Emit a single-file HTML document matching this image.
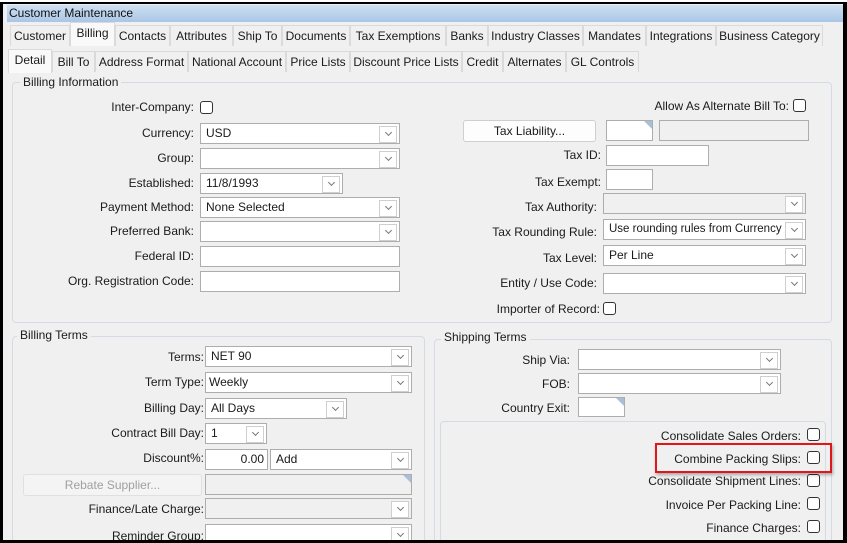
<!DOCTYPE html>
<html><head><meta charset="utf-8"><style>
*{box-sizing:border-box;margin:0;padding:0}
html,body{width:847px;height:543px;overflow:hidden;background:#fff}
#r{position:relative;width:847px;height:543px;overflow:hidden;background:#f0f0f0;font-family:"Liberation Sans",Arial,sans-serif;font-size:12px;color:#1a1a1a}
.a{position:absolute}
.tab{position:absolute;height:21px;border:1px solid #dadada;border-bottom:none;background:#f0f0f0;text-align:center;line-height:20px;white-space:nowrap}
.tab.sel{background:#f9f9f9;height:24px}
.grp{position:absolute;border:1px solid #d5dbe3;border-radius:4px}
.gl{position:absolute;background:#f0f0f0;padding:0 3px;line-height:14px}
.lbl{position:absolute;text-align:right;white-space:nowrap;line-height:20px}
.cb{position:absolute;width:13px;height:13px;border:1px solid #333;border-radius:3px;background:#fff}
.cmb{position:absolute;height:21px;background:#fff;border:1px solid #adadad;line-height:19px;padding-left:5px;white-space:nowrap}
.cmb.dis{background:#f0f0f0}
.cmb::after{content:"";position:absolute;right:2px;top:2px;width:16px;height:15px;border:1px solid #cfcfcf;background:#fff}
.cmb::before{content:"";position:absolute;right:8px;top:6px;width:4px;height:4px;border-right:1px solid #777;border-bottom:1px solid #777;transform:rotate(45deg);z-index:1}
.tb{position:absolute;height:21px;background:#fff;border:1px solid #adadad}
.tri{position:absolute;right:0;top:0;width:0;height:0;border-top:8px solid #a9bfd8;border-left:8px solid transparent}
.btn{position:absolute;height:22px;background:#fdfdfd;border:1px solid #cfcfcf;border-radius:3px;text-align:center;line-height:20px}
.blk{position:absolute;background:#000;z-index:20}
</style></head><body><div id="r">
<div class="blk" style="left:0;top:0;width:847px;height:2px;background:#fff"></div>
<div class="blk" style="left:0;top:2px;width:847px;height:2px"></div>
<div class="blk" style="left:0;top:2px;width:3px;height:541px"></div>
<div class="blk" style="left:843px;top:2px;width:4px;height:541px"></div>
<div class="blk" style="left:0;top:540px;width:847px;height:3px"></div>
<div class="a" style="left:7px;top:5px;width:836px;height:17px;background:linear-gradient(#cfe0f2,#a9c6e6);color:#111;padding-left:2px;line-height:16px">Customer Maintenance</div>

<div class="tab" style="left:10px;top:25px;width:60px">Customer</div>
<div class="tab sel" style="left:70px;top:22px;width:45px">Billing</div>
<div class="tab" style="left:115px;top:25px;width:55px">Contacts</div>
<div class="tab" style="left:170px;top:25px;width:63px">Attributes</div>
<div class="tab" style="left:233px;top:25px;width:49px">Ship To</div>
<div class="tab" style="left:282px;top:25px;width:68px">Documents</div>
<div class="tab" style="left:350px;top:25px;width:96px">Tax Exemptions</div>
<div class="tab" style="left:446px;top:25px;width:42px">Banks</div>
<div class="tab" style="left:488px;top:25px;width:95px">Industry Classes</div>
<div class="tab" style="left:583px;top:25px;width:63px">Mandates</div>
<div class="tab" style="left:646px;top:25px;width:70px">Integrations</div>
<div class="tab" style="left:716px;top:25px;width:107px">Business Category</div>

<div class="tab sel" style="left:8px;top:49px;width:44px">Detail</div>
<div class="tab" style="left:52px;top:51px;width:43px">Bill To</div>
<div class="tab" style="left:95px;top:51px;width:93px">Address Format</div>
<div class="tab" style="left:188px;top:51px;width:98px">National Account</div>
<div class="tab" style="left:286px;top:51px;width:64px">Price Lists</div>
<div class="tab" style="left:350px;top:51px;width:112px">Discount Price Lists</div>
<div class="tab" style="left:462px;top:51px;width:41px">Credit</div>
<div class="tab" style="left:503px;top:51px;width:63px">Alternates</div>
<div class="tab" style="left:566px;top:51px;width:73px">GL Controls</div>

<div class="grp" style="left:12px;top:82px;width:820px;height:241px"></div>
<div class="gl" style="left:20px;top:75px">Billing Information</div>

<div class="lbl" style="right:653px;top:97px">Inter-Company:</div><div class="cb" style="left:200px;top:101px"></div>
<div class="lbl" style="right:653px;top:123px">Currency:</div><div class="cmb" style="left:200px;top:123px;width:200px">USD</div>
<div class="lbl" style="right:653px;top:148px">Group:</div><div class="cmb" style="left:200px;top:148px;width:200px"></div>
<div class="lbl" style="right:653px;top:173px">Established:</div><div class="cmb" style="left:200px;top:173px;width:143px">11/8/1993</div>
<div class="lbl" style="right:653px;top:197px">Payment Method:</div><div class="cmb" style="left:200px;top:197px;width:200px">None Selected</div>
<div class="lbl" style="right:653px;top:221px">Preferred Bank:</div><div class="cmb" style="left:200px;top:221px;width:200px"></div>
<div class="lbl" style="right:653px;top:246px">Federal ID:</div><div class="tb" style="left:200px;top:246px;width:200px"></div>
<div class="lbl" style="right:653px;top:271px">Org. Registration Code:</div><div class="tb" style="left:200px;top:271px;width:200px"></div>

<div class="lbl" style="right:58px;top:96px">Allow As Alternate Bill To:</div><div class="cb" style="left:793px;top:99px"></div>
<div class="btn" style="left:463px;top:120px;width:133px">Tax Liability...</div>
<div class="tb" style="left:606px;top:120px;width:47px"><div class="tri"></div></div>
<div class="tb" style="left:659px;top:120px;width:150px;background:#f0f0f0"></div>
<div class="lbl" style="right:246px;top:145px">Tax ID:</div><div class="tb" style="left:606px;top:145px;width:103px"></div>
<div class="lbl" style="right:246px;top:172px">Tax Exempt:</div><div class="tb" style="left:606px;top:169px;width:47px"></div>
<div class="lbl" style="right:250px;top:197px">Tax Authority:</div><div class="cmb dis" style="left:603px;top:193px;width:203px"></div>
<div class="lbl" style="right:250px;top:222px">Tax Rounding Rule:</div><div class="cmb" style="left:603px;top:219px;width:203px;font-size:11.5px">Use rounding rules from Currency</div>
<div class="lbl" style="right:250px;top:248px">Tax Level:</div><div class="cmb" style="left:603px;top:245px;width:203px">Per Line</div>
<div class="lbl" style="right:250px;top:273px">Entity / Use Code:</div><div class="cmb" style="left:603px;top:273px;width:203px"></div>
<div class="lbl" style="right:247px;top:299px">Importer of Record:</div><div class="cb" style="left:603px;top:302px"></div>

<div class="grp" style="left:12px;top:336px;width:413px;height:215px"></div>
<div class="gl" style="left:17px;top:328px">Billing Terms</div>
<div class="lbl" style="right:643px;top:347px">Terms:</div><div class="cmb" style="left:205px;top:346px;width:207px">NET 90</div>
<div class="lbl" style="right:643px;top:372px">Term Type:</div><div class="cmb" style="left:205px;top:372px;width:207px;padding-left:3px">Weekly</div>
<div class="lbl" style="right:643px;top:398px">Billing Day:</div><div class="cmb" style="left:205px;top:398px;width:142px">All Days</div>
<div class="lbl" style="right:643px;top:423px">Contract Bill Day:</div><div class="cmb" style="left:205px;top:423px;width:62px">1</div>
<div class="lbl" style="right:643px;top:448px">Discount%:</div><div class="tb" style="left:205px;top:449px;width:63px;text-align:right;padding-right:3px;line-height:19px">0.00</div>
<div class="cmb" style="left:270px;top:449px;width:142px">Add</div>
<div class="btn" style="left:23px;top:474px;width:179px;color:#a0a0a0;background:#f4f4f4;border-color:#e0e0e0">Rebate Supplier...</div>
<div class="tb" style="left:205px;top:474px;width:207px;background:#f0f0f0"><div class="tri"></div></div>
<div class="lbl" style="right:643px;top:499px">Finance/Late Charge:</div><div class="cmb dis" style="left:205px;top:498px;width:207px"></div>
<div class="lbl" style="right:643px;top:526px">Reminder Group:</div><div class="cmb" style="left:205px;top:524px;width:207px"></div>

<div class="grp" style="left:434px;top:339px;width:398px;height:215px"></div>
<div class="gl" style="left:441px;top:330px">Shipping Terms</div>
<div class="lbl" style="right:277px;top:350px">Ship Via:</div><div class="cmb" style="left:578px;top:349px;width:203px"></div>
<div class="lbl" style="right:277px;top:374px">FOB:</div><div class="cmb" style="left:578px;top:373px;width:203px"></div>
<div class="lbl" style="right:277px;top:398px">Country Exit:</div><div class="tb" style="left:578px;top:397px;width:47px;height:20px"><div class="tri"></div></div>
<div class="grp" style="left:440px;top:421px;width:386px;height:130px"></div>
<div class="lbl" style="right:46px;top:426px">Consolidate Sales Orders:</div><div class="cb" style="left:807px;top:428px"></div>
<div class="lbl" style="right:46px;top:449px">Combine Packing Slips:</div><div class="cb" style="left:807px;top:451px"></div>
<div class="lbl" style="right:46px;top:471px">Consolidate Shipment Lines:</div><div class="cb" style="left:807px;top:474px"></div>
<div class="lbl" style="right:46px;top:495px">Invoice Per Packing Line:</div><div class="cb" style="left:807px;top:497px"></div>
<div class="lbl" style="right:46px;top:518px">Finance Charges:</div><div class="cb" style="left:807px;top:520px"></div>
<div class="a" style="left:655px;top:443px;width:177px;height:30px;border:2px solid #e0161b;box-shadow:1px 2px 3px rgba(0,0,0,.3)"></div>
</div></body></html>
